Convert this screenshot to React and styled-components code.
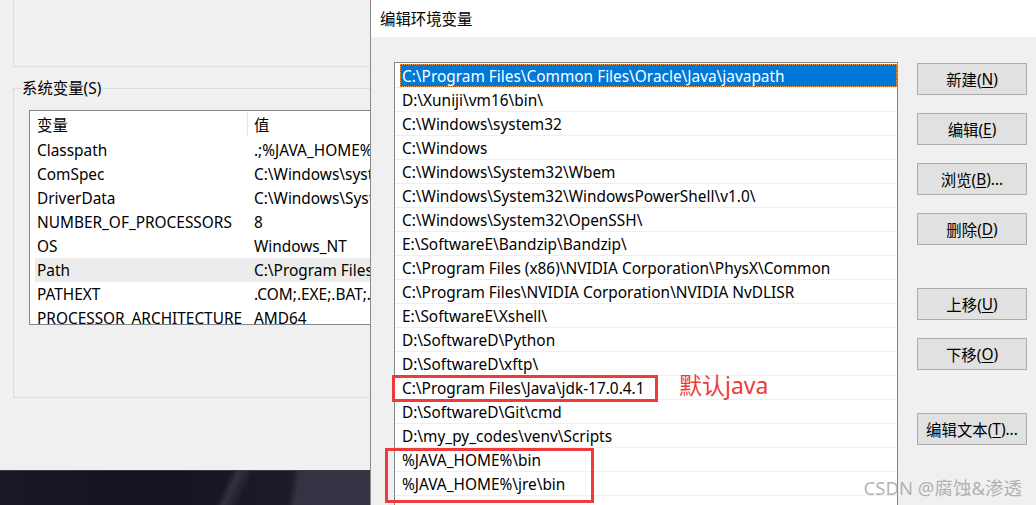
import styled, { createGlobalStyle } from "styled-components";

const GlobalStyle = createGlobalStyle`
    html, body {
        margin: 0;
        padding: 0;
        width: 1036px;
        height: 505px;
        overflow: hidden;
        background: #f0f0f0;
    }
    body {
        font-family: "Noto Sans", "Noto Sans CJK SC", sans-serif;
        font-size: 15.4px;
        color: #000;
    }
`

const sysVars = [
    { name: 'Classpath', value: '.;%JAVA_HOME%\\lib;%JAVA_HOME%\\lib\\tools.jar' },
    { name: 'ComSpec', value: 'C:\\Windows\\system32\\cmd.exe' },
    { name: 'DriverData', value: 'C:\\Windows\\System32\\Drivers\\DriverData' },
    { name: 'NUMBER_OF_PROCESSORS', value: '8' },
    { name: 'OS', value: 'Windows_NT' },
    { name: 'Path', value: 'C:\\Program Files\\Common Files\\Oracle\\Java\\javapath', active: true },
    { name: 'PATHEXT', value: '.COM;.EXE;.BAT;.CMD;.VBS;.VBE;.JS' },
    { name: 'PROCESSOR_ARCHITECTURE', value: 'AMD64' },
]

const paths = [
    'C:\\Program Files\\Common Files\\Oracle\\Java\\javapath',
    'D:\\Xuniji\\vm16\\bin\\',
    'C:\\Windows\\system32',
    'C:\\Windows',
    'C:\\Windows\\System32\\Wbem',
    'C:\\Windows\\System32\\WindowsPowerShell\\v1.0\\',
    'C:\\Windows\\System32\\OpenSSH\\',
    'E:\\SoftwareE\\Bandzip\\Bandzip\\',
    'C:\\Program Files (x86)\\NVIDIA Corporation\\PhysX\\Common',
    'C:\\Program Files\\NVIDIA Corporation\\NVIDIA NvDLISR',
    'E:\\SoftwareE\\Xshell\\',
    'D:\\SoftwareD\\Python',
    'D:\\SoftwareD\\xftp\\',
    'C:\\Program Files\\Java\\jdk-17.0.4.1',
    'D:\\SoftwareD\\Git\\cmd',
    'D:\\my_py_codes\\venv\\Scripts',
    '%JAVA_HOME%\\bin',
    '%JAVA_HOME%\\jre\\bin',
    '',
]

const buttons = [
    { label: '新建', key: 'N', gap: 1 },
    { label: '编辑', key: 'E', gap: 18 },
    { label: '浏览', key: 'B', gap: 18, more: true },
    { label: '删除', key: 'D', gap: 18 },
    { label: '上移', key: 'U', gap: 43 },
    { label: '下移', key: 'O', gap: 18 },
    { label: '编辑文本', key: 'T', gap: 43, more: true },
]

const Screen = styled.div`
    position: relative;
    display: flex;
    width: 1036px;
    height: 505px;
    overflow: hidden;
`

const LeftPane = styled.div`
    width: 370px;
    flex-shrink: 0;
    display: flex;
    flex-direction: column;
    overflow: hidden;
`

const TopGroup = styled.div`
    margin-left: 13px;
    width: 600px;
    height: 66px;
    flex-shrink: 0;
    border-left: 1px solid #dcdcdc;
    border-bottom: 1px solid #dcdcdc;
`

const SysGroup = styled.div`
    position: relative;
    margin: 21px 0 0 13px;
    width: 357px;
    height: 310px;
    flex-shrink: 0;
    box-sizing: border-box;
    border: 1px solid #dcdcdc;
    border-right: none;
    padding: 21px 0 0 15px;
`

const Legend = styled.span`
    position: absolute;
    top: -10px;
    left: 7px;
    padding: 0 1px;
    background: #f0f0f0;
    line-height: 20px;
`

const Table = styled.div`
    width: 342px;
    height: 215px;
    box-sizing: border-box;
    border: 1px solid #828790;
    border-right: none;
    background: #fff;
    overflow: hidden;
`

const HeadRow = styled.div`
    display: flex;
    height: 27px;
    align-items: center;
`

const HeadCell = styled.div`
    width: ${({w}) => w ? `${w}px` : 'auto'};
    flex: ${({w}) => w ? 'none' : 1};
    box-sizing: border-box;
    padding-left: ${({pl}) => pl}px;
    height: 25px;
    line-height: 27px;
    border-right: ${({sep}) => sep ? '1px solid #e5e5e5' : 'none'};
`

const VarRow = styled.div`
    display: flex;
    height: 24px;
    line-height: 26px;
    margin-left: 5px;
    background: ${({active}) => active ? '#ececec' : 'transparent'};
    white-space: nowrap;
`

const NameCell = styled.div`
    width: 219px;
    box-sizing: border-box;
    padding-left: 2px;
    flex-shrink: 0;
    overflow: hidden;
`

const ValueCell = styled.div`
    flex: 1;
    overflow: hidden;
`

const Filler = styled.div`
    flex: 1;
`

const DarkStrip = styled.div`
    height: 34px;
    flex-shrink: 0;
    border-top: 1px solid #3a3a46;
    background:
        linear-gradient(115deg, transparent 0 60%, rgba(70, 70, 90, 0.55) 62%, transparent 66%),
        linear-gradient(100deg, transparent 0 78%, rgba(60, 60, 78, 0.7) 80% 100%),
        linear-gradient(90deg, #181826 0%, #14131f 45%, #22222f 100%);
`

const Dialog = styled.div`
    flex: 1;
    display: flex;
    flex-direction: column;
    border-left: 1px solid #8a8a8a;
    overflow: hidden;
`

const TitleBar = styled.div`
    height: 37px;
    flex-shrink: 0;
    background: #fff;
    display: flex;
    align-items: center;
    padding-left: 9px;
    padding-bottom: 1px;
    box-sizing: border-box;
`

const DialogBody = styled.div`
    flex: 1;
    display: flex;
    gap: 19px;
    padding: 25px 0 0 23px;
    background: #f0f0f0;
`

const PathList = styled.div`
    width: 504px;
    height: 470px;
    flex-shrink: 0;
    box-sizing: border-box;
    border: 1px solid #828790;
    background: #fff;
    padding-top: 1px;
    overflow: hidden;
`

const PathRow = styled.div`
    height: 24px;
    box-sizing: border-box;
    border-bottom: 1px solid #efefef;
    display: flex;
`

const PathCell = styled.div`
    flex: 1;
    margin-left: 5px;
    padding-left: 1px;
    height: 23px;
    line-height: 23px;
    box-sizing: border-box;
    white-space: nowrap;
    color: ${({selected}) => selected ? '#fff' : '#000'};
    background: ${({selected}) => selected ? '#0078d7' : 'transparent'};
    border: 1px dotted ${({selected}) => selected ? '#f0a050' : 'transparent'};
`

const ButtonColumn = styled.div`
    display: flex;
    flex-direction: column;
`

const Button = styled.div`
    margin-top: ${({gap}) => gap}px;
    width: 110px;
    height: 32px;
    box-sizing: border-box;
    border: 1px solid #adadad;
    background: #e1e1e1;
    display: flex;
    align-items: center;
    justify-content: center;
    white-space: nowrap;

    u {
        text-decoration-thickness: 1px;
        text-underline-offset: 2px;
    }
`

const Mark = styled.div`
    position: absolute;
    left: ${({x}) => x}px;
    top: ${({y}) => y}px;
    width: ${({w}) => w}px;
    height: ${({h}) => h}px;
    box-sizing: border-box;
    border: 3px solid #ef3b3b;
    pointer-events: none;
`

const Note = styled.div`
    position: absolute;
    left: 679px;
    top: 370px;
    font-size: 23px;
    line-height: 30px;
    color: #ef3b3b;
`

const Watermark = styled.div`
    position: absolute;
    right: 14px;
    bottom: 5px;
    font-size: 18.5px;
    line-height: 24px;
    color: rgba(160, 160, 160, 0.8);
    white-space: nowrap;
`

const App = () => {
    return (
        <>
            <GlobalStyle />
            <Screen>
                <LeftPane>
                    <TopGroup />
                    <SysGroup>
                        <Legend>系统变量(S)</Legend>
                        <Table>
                            <HeadRow>
                                <HeadCell w={218} pl={7} sep>变量</HeadCell>
                                <HeadCell pl={6}>值</HeadCell>
                            </HeadRow>
                            {sysVars.map(v => (
                                <VarRow key={v.name} active={v.active}>
                                    <NameCell>{v.name}</NameCell>
                                    <ValueCell>{v.value}</ValueCell>
                                </VarRow>
                            ))}
                        </Table>
                    </SysGroup>
                    <Filler />
                    <DarkStrip />
                </LeftPane>

                <Dialog>
                    <TitleBar>编辑环境变量</TitleBar>
                    <DialogBody>
                        <PathList>
                            {paths.map((p, i) => (
                                <PathRow key={i}>
                                    <PathCell selected={i === 0}>{p}</PathCell>
                                </PathRow>
                            ))}
                        </PathList>
                        <ButtonColumn>
                            {buttons.map(b => (
                                <Button key={b.key} gap={b.gap}>
                                    {b.label}(<u>{b.key}</u>){b.more && '...'}
                                </Button>
                            ))}
                        </ButtonColumn>
                    </DialogBody>
                </Dialog>

                <Mark x={392} y={375} w={266} h={27} />
                <Mark x={385} y={448} w={209} h={55} />
                <Note>默认java</Note>
                <Watermark>CSDN @腐蚀&amp;渗透</Watermark>
            </Screen>
        </>
    );
}

export default App;
